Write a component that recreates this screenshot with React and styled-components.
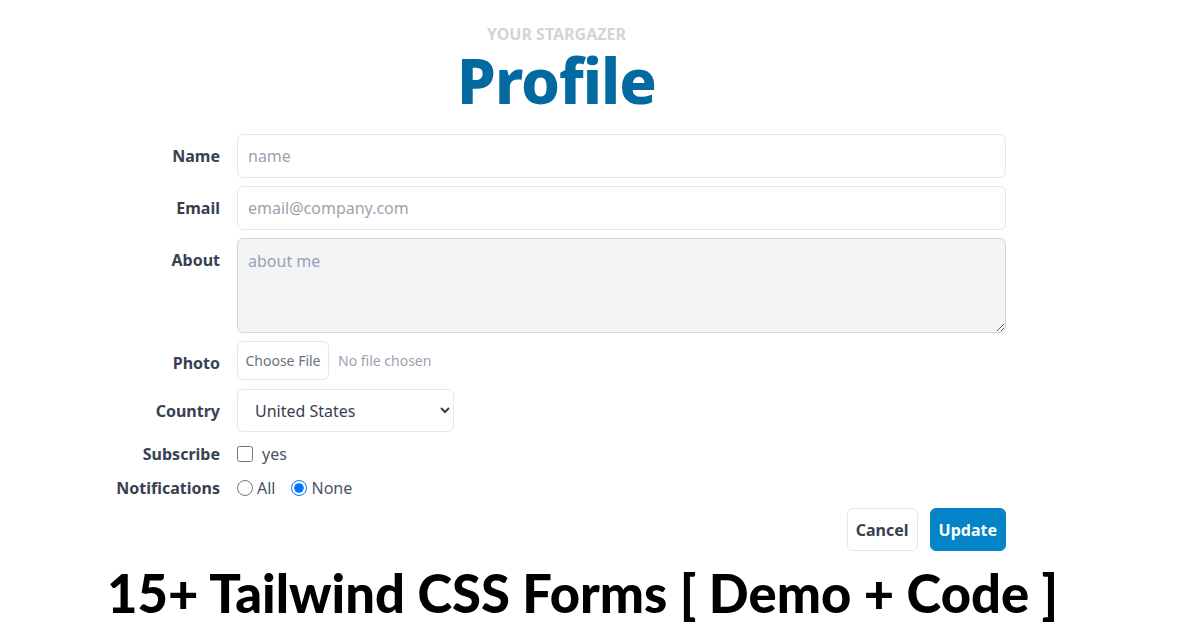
import React from "react";
import styled, { createGlobalStyle } from "styled-components";

const Global = createGlobalStyle`
  * { box-sizing: border-box; }
  html, body { margin: 0; padding: 0; background: #fff; }
  body { font-family: "Noto Sans", "Open Sans", sans-serif; color: #374151; }
`;

const Page = styled.div`
  width: 1200px;
  height: 628px;
  overflow: hidden;
  display: flex;
  flex-direction: column;
  padding: 24px 0 0 107px;
`;

const Form = styled.form`
  width: 899px;
  display: flex;
  flex-direction: column;
`;

const Header = styled.header`
  display: flex;
  flex-direction: column;
  align-items: center;
  margin-bottom: 22px;
`;

const Eyebrow = styled.div`
  font-size: 16px;
  font-weight: 700;
  color: #d1d5db;
  line-height: 20px;
`;

const Title = styled.h1`
  margin: 4px 0 0;
  font-size: 62px;
  font-weight: 800;
  line-height: 64px;
  color: #0369a1;
  letter-spacing: -1px;
`;

const Row = styled.div`
  display: grid;
  grid-template-columns: 113px 769px;
  column-gap: 17px;
  align-items: ${(p) => (p.$center ? "center" : "start")};
  margin-bottom: ${(p) => p.$mb ?? 8}px;
`;

const Label = styled.label`
  text-align: right;
  font-size: 16px;
  font-weight: 700;
  line-height: 24px;
  color: #374151;
  padding-top: ${(p) => (p.$center ? 0 : 10)}px;
`;

const Input = styled.input`
  width: 100%;
  height: 44px;
  border: 1px solid #e5e7eb;
  border-radius: 6px;
  padding: 0 10px;
  font-family: inherit;
  font-size: 16px;
  color: #374151;
  outline: none;
  &::placeholder { color: #9ca3af; }
`;

const TextArea = styled.textarea`
  width: 100%;
  height: 95px;
  display: block;
  border: 1px solid #d1d5db;
  border-radius: 6px;
  background: #f3f4f6;
  padding: 10px 10px;
  font-family: inherit;
  font-size: 16px;
  line-height: 24px;
  color: #374151;
  outline: none;
  &::placeholder { color: #94a3b8; }
`;

const FileInput = styled.input`
  font-family: inherit;
  font-size: 14px;
  color: #9ca3af;
  height: 39px;
  &::file-selector-button {
    height: 39px;
    width: 92px;
    margin-right: 9px;
    border: 1px solid #e5e7eb;
    border-radius: 6px;
    background: #fff;
    color: #6b7280;
    font-family: inherit;
    font-size: 14px;
    padding: 0;
  }
`;

const Select = styled.select`
  width: 217px;
  height: 43px;
  border: 1px solid #e5e7eb;
  border-radius: 6px;
  background: #fff;
  padding: 0 10px 0 13px;
  font-family: inherit;
  font-size: 16px;
  color: #374151;
  outline: none;
`;

const Options = styled.div`
  display: flex;
  align-items: center;
  gap: ${(p) => p.$gap ?? 0}px;
  font-size: 16px;
  line-height: 24px;
  color: #4b5563;
`;

const Choice = styled.label`
  display: flex;
  align-items: center;
  gap: ${(p) => p.$gap ?? 4}px;
`;

const Check = styled.input`
  margin: 0;
  width: 16px;
  height: 16px;
`;

const Actions = styled.div`
  display: flex;
  justify-content: flex-end;
  gap: 12px;
`;

const Button = styled.button`
  height: 43px;
  padding: 0 8px;
  border-radius: 6px;
  border: 1px solid ${(p) => (p.$primary ? "#0284c7" : "#e5e7eb")};
  background: ${(p) => (p.$primary ? "#0284c7" : "#fff")};
  color: ${(p) => (p.$primary ? "#fff" : "#374151")};
  font-family: inherit;
  font-size: 16px;
  font-weight: 700;
`;

const Banner = styled.div`
  margin-top: 14px;
  font-family: "Lato", sans-serif;
  font-weight: 900;
  font-size: 52.5px;
  line-height: 56px;
  color: #000;
  white-space: nowrap;
`;

export default function App() {
  return (
    <Page>
      <Global />
      <Form onSubmit={(e) => e.preventDefault()}>
        <Header>
          <Eyebrow>YOUR STARGAZER</Eyebrow>
          <Title>Profile</Title>
        </Header>
        <Row>
          <Label>Name</Label>
          <Input placeholder="name" />
        </Row>
        <Row>
          <Label>Email</Label>
          <Input placeholder="email@company.com" />
        </Row>
        <Row $mb={8}>
          <Label>About</Label>
          <TextArea placeholder="about me" />
        </Row>
        <Row $mb={9}>
          <Label>Photo</Label>
          <FileInput type="file" />
        </Row>
        <Row $mb={10}>
          <Label>Country</Label>
          <Select defaultValue="United States">
            <option>United States</option>
            <option>Canada</option>
            <option>Mexico</option>
          </Select>
        </Row>
        <Row $center $mb={10}>
          <Label $center>Subscribe</Label>
          <Options>
            <Choice $gap={9}>
              <Check type="checkbox" />
              yes
            </Choice>
          </Options>
        </Row>
        <Row $center $mb={8}>
          <Label $center>Notifications</Label>
          <Options $gap={16}>
            <Choice>
              <Check type="radio" name="n" />
              All
            </Choice>
            <Choice>
              <Check type="radio" name="n" defaultChecked />
              None
            </Choice>
          </Options>
        </Row>
        <Actions>
          <Button type="button">Cancel</Button>
          <Button type="submit" $primary>Update</Button>
        </Actions>
      </Form>
      <Banner>15+ Tailwind CSS Forms [ Demo + Code ]</Banner>
    </Page>
  );
}
